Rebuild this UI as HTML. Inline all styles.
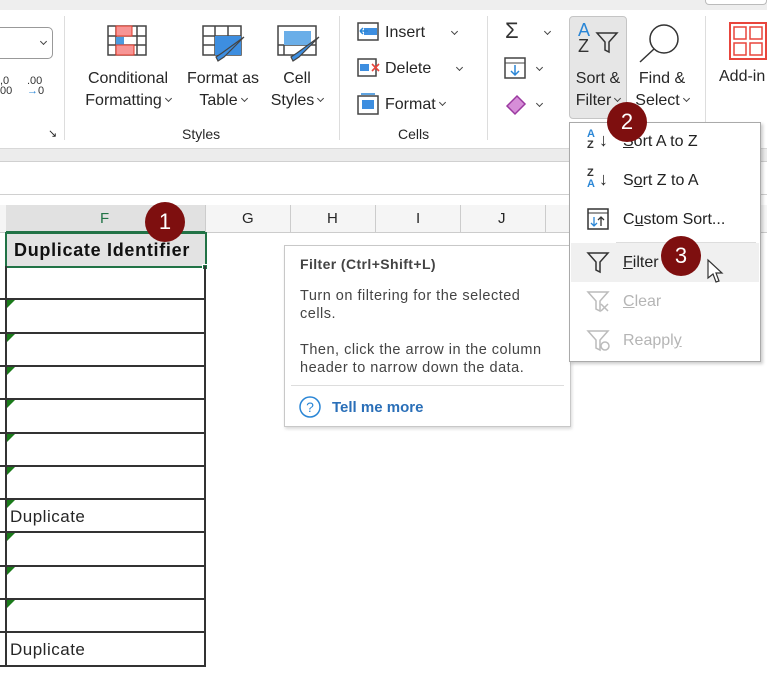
<!DOCTYPE html>
<html><head><style>
*{margin:0;padding:0;box-sizing:border-box}
body{width:767px;height:678px;overflow:hidden;background:#fff;font-family:"Liberation Sans",sans-serif;position:relative;color:#222}
.a{position:absolute}
.t{position:absolute;font-size:15px;color:#262626;white-space:nowrap}
.c{text-align:center;line-height:22px}
.hl{position:absolute;left:0;width:206px;height:2px;background:#333}
.tri{position:absolute;left:7px;width:0;height:0;border-top:8px solid #1a7a1a;border-right:8px solid transparent}
.badge{position:absolute;width:40px;height:40px;border-radius:50%;background:#7e0f0f;color:#fff;font-size:22px;text-align:center;line-height:40px}
.mi{position:absolute;left:623px;font-size:16px;color:#222;white-space:nowrap}
.ch{display:inline-block;width:5px;height:5px;border-right:1.3px solid #444;border-bottom:1.3px solid #444;transform:rotate(45deg);vertical-align:4px;margin-left:4px}
.cha{position:absolute;width:5px;height:5px;border-right:1.3px solid #444;border-bottom:1.3px solid #444;transform:rotate(45deg)}
</style></head><body>
<div class="a" style="left:0;top:0;width:767px;height:10px;background:#eeeeee"></div>
<div class="a" style="left:705px;top:0;width:62px;height:5px;border:1px solid #bbb;border-top:none;border-radius:0 0 4px 4px;background:#fff"></div>
<div class="a" style="left:0;top:10px;width:767px;height:138px;background:#fff"></div>
<div class="a" style="left:-5px;top:27px;width:58px;height:32px;border:1px solid #999;border-radius:5px"></div>
<div class="cha" style="left:41px;top:39px"></div>
<div class="t" style="left:0;top:76px;font-size:11px;line-height:10px;color:#333">,0<br>00</div>
<div class="t" style="left:27px;top:76px;font-size:11px;line-height:10px;color:#333">.00<br><span style="color:#2a86d6">→</span>0</div>
<div class="t" style="left:48px;top:127px;font-size:11px">↘</div>
<div class="a" style="left:64px;top:16px;width:1px;height:124px;background:#ddd"></div>
<svg class="a" style="left:107px;top:25px" width="42" height="34"><g stroke="#444" fill="none" stroke-width="1.5"><rect x="1" y="1" width="38" height="29"/><line x1="1" y1="11" x2="39" y2="11"/><line x1="1" y1="20" x2="39" y2="20"/><line x1="9" y1="1" x2="9" y2="30"/><line x1="30" y1="1" x2="30" y2="30"/></g><rect x="9" y="1" width="16" height="10" fill="#f79595" stroke="#e03a2a"/><rect x="9" y="12" width="8" height="8" fill="#4a9ae0"/><rect x="9" y="20" width="18" height="10" fill="#f79595" stroke="#e03a2a"/></svg>
<svg class="a" style="left:202px;top:25px" width="44" height="38"><g stroke="#444" fill="none" stroke-width="1.5"><rect x="1" y="1" width="38" height="29"/><line x1="1" y1="11" x2="39" y2="11"/><line x1="1" y1="20" x2="39" y2="20"/><line x1="13" y1="1" x2="13" y2="30"/><line x1="26" y1="1" x2="26" y2="30"/></g><rect x="13" y="11" width="26" height="19" fill="#3d8ee0"/><path d="M42 12 L22 32 L16 36 L14 32 L20 28 Z" fill="#3d8ee0" stroke="#444" stroke-width="1.2"/></svg>
<svg class="a" style="left:277px;top:25px" width="44" height="38"><g stroke="#444" fill="none" stroke-width="1.5"><rect x="1" y="1" width="38" height="29"/><line x1="1" y1="20" x2="39" y2="20"/><line x1="7" y1="20" x2="7" y2="30"/></g><rect x="7" y="6" width="27" height="14" fill="#6aaee8"/><path d="M42 12 L22 32 L16 36 L14 32 L20 28 Z" fill="#3d8ee0" stroke="#444" stroke-width="1.2"/></svg>
<div class="t c" style="left:76px;top:68px;width:104px;font-size:16px">Conditional<br>Formatting<span class="ch"></span></div>
<div class="t c" style="left:183px;top:68px;width:80px;font-size:16px">Format as<br>Table<span class="ch"></span></div>
<div class="t c" style="left:264px;top:68px;width:66px;font-size:16px">Cell<br>Styles<span class="ch"></span></div>
<div class="t" style="left:182px;top:126px;font-size:14px">Styles</div>
<div class="a" style="left:339px;top:16px;width:1px;height:124px;background:#ddd"></div>
<svg class="a" style="left:357px;top:22px" width="22" height="20"><rect x="1" y="1" width="20" height="17" fill="none" stroke="#444" stroke-width="1.5"/><rect x="7" y="6" width="13" height="7" fill="#3d8ee0"/><path d="M3 9h8M3 9l3-3M3 9l3 3" stroke="#2a86d6" stroke-width="1.5" fill="none"/></svg>
<div class="t" style="left:385px;top:24px;font-size:16px">Insert</div><div class="cha" style="left:452px;top:29px"></div>
<svg class="a" style="left:357px;top:58px" width="24" height="20"><rect x="1" y="1" width="18" height="17" fill="none" stroke="#444" stroke-width="1.5"/><rect x="3" y="6" width="9" height="7" fill="#3d8ee0"/><path d="M15 6l7 7M22 6l-7 7" stroke="#e8453c" stroke-width="1.6"/></svg>
<div class="t" style="left:385px;top:60px;font-size:16px">Delete</div><div class="cha" style="left:457px;top:65px"></div>
<svg class="a" style="left:357px;top:92px" width="22" height="24"><rect x="1" y="4" width="20" height="18" fill="none" stroke="#444" stroke-width="1.5"/><rect x="5" y="8" width="12" height="9" fill="#3d8ee0"/><path d="M4 2h14" stroke="#2a86d6" stroke-width="1.5"/></svg>
<div class="t" style="left:385px;top:96px;font-size:16px">Format<span class="ch"></span></div>
<div class="t" style="left:398px;top:126px;font-size:14px">Cells</div>
<div class="a" style="left:487px;top:16px;width:1px;height:124px;background:#ddd"></div>
<div class="t" style="left:505px;top:18px;font-size:22px;color:#333">Σ</div><div class="cha" style="left:545px;top:29px"></div>
<svg class="a" style="left:504px;top:57px" width="24" height="24"><rect x="1" y="1" width="20" height="20" fill="none" stroke="#444" stroke-width="1.5"/><path d="M1 6h20" stroke="#444"/><path d="M11 8v10M7 14l4 4 4-4" stroke="#2a86d6" stroke-width="1.5" fill="none"/></svg>
<div class="cha" style="left:537px;top:65px"></div>
<svg class="a" style="left:504px;top:92px" width="24" height="24"><path d="M3 14l10-10 8 8-10 10z" fill="#d68ed8" stroke="#9b3aa0" stroke-width="1.5"/><path d="M3 14l5 5" stroke="#9b3aa0"/></svg>
<div class="cha" style="left:537px;top:101px"></div>
<div class="a" style="left:569px;top:16px;width:58px;height:103px;background:#e6e6e6;border:1px solid #c5c5c5;border-radius:4px"></div>
<div class="t" style="left:578px;top:22px;font-size:18px;color:#2a86d6;line-height:16px">A<br><span style="color:#333">Z</span></div>
<svg class="a" style="left:595px;top:31px" width="26" height="24"><path d="M2 2h20l-8 9v10l-4-2v-8z" fill="none" stroke="#333" stroke-width="1.5"/></svg>
<div class="t c" style="left:566px;top:68px;width:64px;font-size:16px">Sort &amp;<br>Filter<span class="ch"></span></div>
<svg class="a" style="left:637px;top:20px" width="50" height="44"><circle cx="27" cy="19" r="14" fill="none" stroke="#333" stroke-width="1.5"/><path d="M17 29L3 42" stroke="#333" stroke-width="1.5"/></svg>
<div class="t c" style="left:628px;top:68px;width:68px;font-size:16px">Find &amp;<br>Select<span class="ch"></span></div>
<div class="a" style="left:705px;top:16px;width:1px;height:124px;background:#ddd"></div>
<svg class="a" style="left:729px;top:22px" width="40" height="40"><rect x="1" y="1" width="36" height="36" fill="none" stroke="#e8453c" stroke-width="2"/><g fill="none" stroke="#e8453c" stroke-width="1.5"><rect x="5" y="5" width="12" height="12"/><rect x="21" y="5" width="12" height="12"/><rect x="5" y="21" width="12" height="12"/><rect x="21" y="21" width="12" height="12"/></g></svg>
<div class="t" style="left:719px;top:68px;font-size:16px">Add-in</div>
<div class="a" style="left:0;top:148px;width:767px;height:13px;background:#ececec;border-top:1px solid #d8d8d8"></div>
<div class="a" style="left:0;top:161px;width:767px;height:34px;background:#fff;border-top:1px solid #d0d0d0;border-bottom:1px solid #d0d0d0"></div>
<div class="a" style="left:0;top:195px;width:767px;height:10px;background:#fff"></div>
<div class="a" style="left:0;top:205px;width:767px;height:28px;background:#f5f5f5;border-bottom:1px solid #ccc"></div>
<div class="a" style="left:6px;top:205px;width:199px;height:28px;background:#e1e1e1;border-bottom:2px solid #217346"></div>
<div class="t" style="left:100px;top:210px;font-size:15px;color:#217346">F</div>
<div class="a" style="left:205px;top:205px;width:1px;height:27px;background:#ccc"></div>
<div class="t" style="left:242px;top:210px">G</div>
<div class="a" style="left:290px;top:205px;width:1px;height:27px;background:#ccc"></div>
<div class="t" style="left:327px;top:210px">H</div>
<div class="a" style="left:375px;top:205px;width:1px;height:27px;background:#ccc"></div>
<div class="t" style="left:416px;top:210px">I</div>
<div class="a" style="left:460px;top:205px;width:1px;height:27px;background:#ccc"></div>
<div class="t" style="left:498px;top:210px">J</div>
<div class="a" style="left:545px;top:205px;width:1px;height:27px;background:#ccc"></div>
<div class="a" style="left:6px;top:233px;width:199px;height:33px;background:#e3e3e3"></div>
<div class="t" style="left:14px;top:240px;font-size:18px;font-weight:bold;color:#111;letter-spacing:0.7px">Duplicate Identifier</div>
<div class="a" style="left:5px;top:232px;width:202px;height:36px;border:2px solid #217346"></div>
<div class="a" style="left:202px;top:264px;width:6px;height:6px;background:#217346;border:1px solid #fff"></div>
<div class="a" style="left:5px;top:266px;width:2px;height:400px;background:#333"></div>
<div class="a" style="left:204px;top:266px;width:2px;height:400px;background:#333"></div>
<div class="hl" style="top:298px"></div><div class="hl" style="top:332px"></div><div class="hl" style="top:365px"></div><div class="hl" style="top:398px"></div><div class="hl" style="top:432px"></div><div class="hl" style="top:465px"></div><div class="hl" style="top:498px"></div><div class="hl" style="top:531px"></div><div class="hl" style="top:565px"></div><div class="hl" style="top:598px"></div><div class="hl" style="top:631px"></div><div class="hl" style="top:665px"></div>
<div class="tri" style="top:300px"></div><div class="tri" style="top:334px"></div><div class="tri" style="top:367px"></div><div class="tri" style="top:400px"></div><div class="tri" style="top:434px"></div><div class="tri" style="top:467px"></div><div class="tri" style="top:500px"></div><div class="tri" style="top:533px"></div><div class="tri" style="top:567px"></div><div class="tri" style="top:600px"></div>
<div class="t" style="left:10px;top:507px;font-size:17px;letter-spacing:0.5px">Duplicate</div>
<div class="t" style="left:10px;top:640px;font-size:17px;letter-spacing:0.5px">Duplicate</div>
<div class="a" style="left:284px;top:245px;width:287px;height:182px;background:#fff;border:1px solid #c8c8c8;box-shadow:1px 2px 3px rgba(0,0,0,.15)"></div>
<div class="t" style="left:300px;top:256px;font-size:14px;font-weight:bold;color:#444;letter-spacing:0.4px">Filter (Ctrl+Shift+L)</div>
<div class="t" style="left:300px;top:287px;font-size:14.5px;color:#444;line-height:18px;letter-spacing:0.5px">Turn on filtering for the selected<br>cells.<br><br>Then, click the arrow in the column<br>header to narrow down the data.</div>
<div class="a" style="left:291px;top:385px;width:273px;height:1px;background:#ddd"></div>
<svg class="a" style="left:298px;top:395px" width="24" height="24"><circle cx="12" cy="12" r="10" fill="none" stroke="#2a86d6" stroke-width="1.5"/><text x="12" y="17" font-size="14" text-anchor="middle" fill="#2a86d6" font-family="Liberation Sans">?</text></svg>
<div class="t" style="left:332px;top:399px;font-size:15px;font-weight:bold;color:#2a6fb8">Tell me more</div>
<div class="a" style="left:569px;top:122px;width:192px;height:240px;background:#fff;border:1px solid #aaa;box-shadow:2px 2px 3px rgba(0,0,0,.2)"></div>
<div class="t" style="left:587px;top:129px;font-size:11px;font-weight:bold;line-height:11px;color:#2a86d6">A<br><span style="color:#333">Z</span></div>
<div class="t" style="left:599px;top:130px;font-size:18px">↓</div>
<div class="mi" style="top:133px"><u>S</u>ort A to Z</div>
<div class="t" style="left:587px;top:168px;font-size:11px;font-weight:bold;line-height:11px;color:#333">Z<br><span style="color:#2a86d6">A</span></div>
<div class="t" style="left:599px;top:169px;font-size:18px">↓</div>
<div class="mi" style="top:172px">S<u>o</u>rt Z to A</div>
<svg class="a" style="left:587px;top:208px" width="24" height="24"><rect x="1" y="1" width="20" height="20" fill="none" stroke="#333" stroke-width="1.5"/><path d="M1 5h20" stroke="#333"/><path d="M7 9v9M4 15l3 3 3-3" stroke="#2a86d6" stroke-width="1.3" fill="none"/><path d="M14 18v-9M11 12l3-3 3 3" stroke="#333" stroke-width="1.3" fill="none"/></svg>
<div class="mi" style="top:211px">C<u>u</u>stom Sort...</div>
<div class="a" style="left:616px;top:242px;width:140px;height:1px;background:#ddd"></div>
<div class="a" style="left:571px;top:243px;width:188px;height:39px;background:#f0f0f0"></div>
<svg class="a" style="left:586px;top:251px" width="26" height="24"><path d="M2 2h20l-8 9v10l-4-2v-8z" fill="none" stroke="#333" stroke-width="1.5"/></svg>
<div class="mi" style="top:254px"><u>F</u>ilter</div>
<svg class="a" style="left:706px;top:258px" width="20" height="28"><path d="M2 2v18l5-4 3 8 3-1-3-8h6z" fill="#fff" stroke="#333" stroke-width="1.2"/></svg>
<svg class="a" style="left:586px;top:290px" width="26" height="24"><path d="M2 2h20l-8 9v10l-4-2v-8z" fill="none" stroke="#bbb" stroke-width="1.5"/><path d="M15 14l7 7M22 14l-7 7" stroke="#bbb" stroke-width="1.5"/></svg>
<div class="mi" style="top:293px;color:#b5b5b5"><u>C</u>lear</div>
<svg class="a" style="left:586px;top:329px" width="26" height="24"><path d="M2 2h20l-8 9v10l-4-2v-8z" fill="none" stroke="#bbb" stroke-width="1.5"/><circle cx="19" cy="17" r="4" fill="none" stroke="#bbb" stroke-width="1.5"/></svg>
<div class="mi" style="top:332px;color:#b5b5b5">Reappl<u>y</u></div>
<div class="badge" style="left:145px;top:202px">1</div>
<div class="badge" style="left:607px;top:102px">2</div>
<div class="badge" style="left:661px;top:236px">3</div>
</body></html>
